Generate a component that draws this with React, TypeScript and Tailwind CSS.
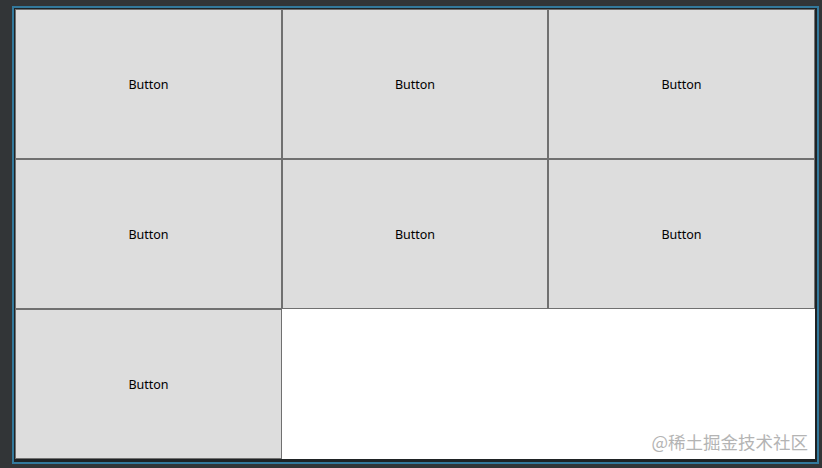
import React from "react";

const cells = Array.from({ length: 7 }, (_, i) => i);

export default function App() {
  return (
    <div className="w-[822px] h-[468px] bg-[#323537] pt-[6px] pl-[12px] pr-[3px] pb-[4px] overflow-hidden">
      <div className="w-[807px] h-[458px] border-2 border-[#33799c] bg-[#1f2325] pt-[1px] pl-[1px] pr-[2px] pb-[3px]">
        <div className="relative w-[800px] h-[450px] bg-white grid grid-cols-[267px_266px_267px] grid-rows-[150px_150px_150px]">
          {cells.map((i) => (
            <div
              key={i}
              className="flex items-center justify-center pt-[3px] bg-[#dddddd] border border-[#707070] text-[12.5px] text-black font-['Noto_Sans','Open_Sans',sans-serif]"
            >
              Button
            </div>
          ))}
          <span className="absolute right-[7px] bottom-[9px] text-[17.5px] leading-none text-[#b4b4b4] font-['Noto_Sans_CJK_SC','Noto_Sans',sans-serif]">
            @稀土掘金技术社区
          </span>
        </div>
      </div>
    </div>
  );
}
